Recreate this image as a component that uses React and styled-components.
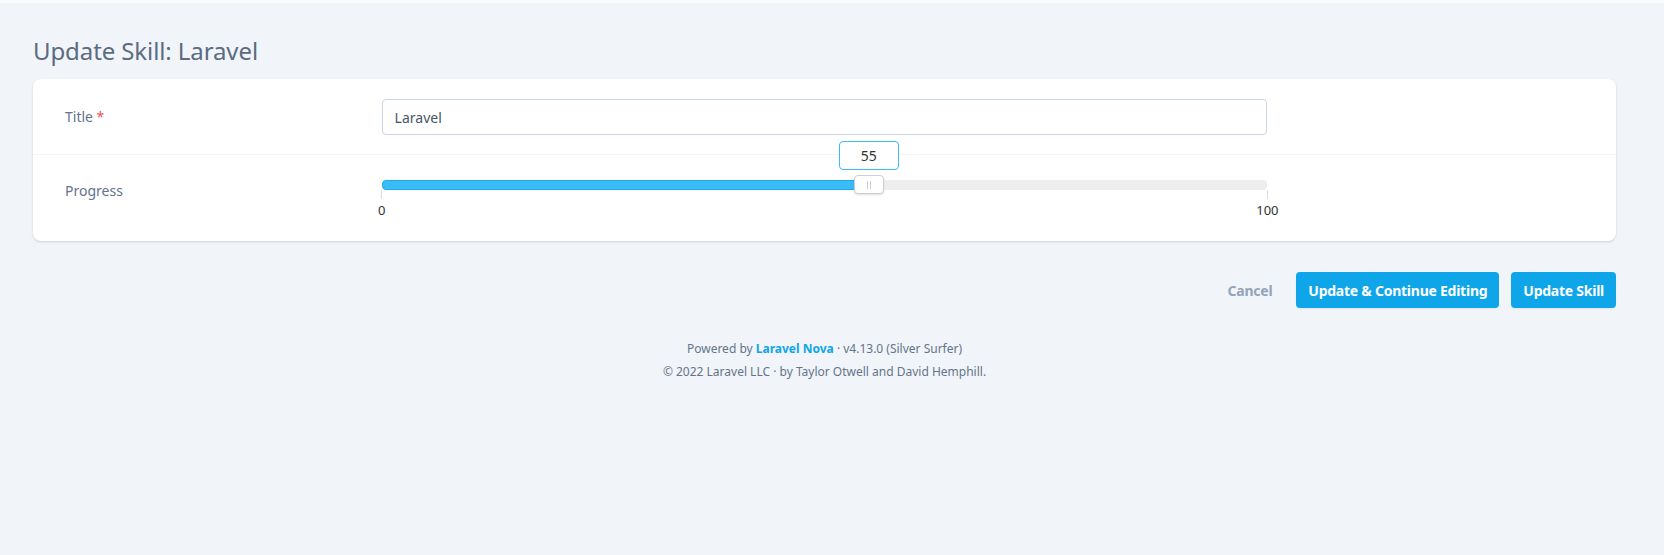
import React from 'react';
import styled, { createGlobalStyle } from 'styled-components';

const GlobalStyle = createGlobalStyle`
  html, body {
    margin: 0;
    padding: 0;
    background: #f1f5f9;
    font-family: 'Noto Sans', 'Open Sans', sans-serif;
    -webkit-font-smoothing: antialiased;
  }
  * {
    box-sizing: border-box;
  }
`;

const skill = { title: 'Laravel', progress: 55, min: 0, max: 100 };

export default function App() {
  const pct = ((skill.progress - skill.min) / (skill.max - skill.min)) * 100;

  return (
    <>
      <GlobalStyle />
      <TopStrip />
      <Main>
        <Heading>Update Skill: {skill.title}</Heading>
        <Card>
          <FieldRow>
            <LabelCol>
              <Label>
                Title <Required>*</Required>
              </Label>
            </LabelCol>
            <FieldCol>
              <TextInput type="text" defaultValue={skill.title} />
            </FieldCol>
          </FieldRow>
          <FieldRow $last>
            <LabelCol $offset={6}>
              <Label>Progress</Label>
            </LabelCol>
            <FieldCol>
              <Slider>
                <Rail>
                  <Fill style={{ width: `${pct}%` }} />
                  <Dot style={{ left: `${pct}%` }}>
                    <Grip />
                    <Grip />
                    <Tooltip>{skill.progress}</Tooltip>
                  </Dot>
                </Rail>
                <Marks>
                  <Mark>
                    <Tick />
                    <MarkLabel>{skill.min}</MarkLabel>
                  </Mark>
                  <Mark>
                    <Tick />
                    <MarkLabel>{skill.max}</MarkLabel>
                  </Mark>
                </Marks>
              </Slider>
            </FieldCol>
          </FieldRow>
        </Card>

        <Actions>
          <CancelButton type="button">Cancel</CancelButton>
          <PrimaryButton type="button">Update &amp; Continue Editing</PrimaryButton>
          <PrimaryButton type="button">Update Skill</PrimaryButton>
        </Actions>

        <Footer>
          <FooterLine>
            Powered by <FooterLink href="#">Laravel Nova</FooterLink> · v4.13.0 (Silver Surfer)
          </FooterLine>
          <FooterLine $second>© 2022 Laravel LLC · by Taylor Otwell and David Hemphill.</FooterLine>
        </Footer>
      </Main>
    </>
  );
}

const TopStrip = styled.div`
  height: 3px;
  background: #fafbfc;
`;

const Main = styled.main`
  padding: 0 48px 0 33px;
`;

const Heading = styled.h1`
  margin: 32px 0 12px;
  font-size: 24px;
  line-height: 32px;
  font-weight: 400;
  letter-spacing: -0.1px;
  color: #5b6b82;
`;

const Card = styled.div`
  background: #fff;
  border-radius: 8px;
  box-shadow: 0 1px 3px rgba(15, 23, 42, 0.1), 0 1px 2px rgba(15, 23, 42, 0.06);
`;

const FieldRow = styled.div`
  display: flex;
  align-items: flex-start;
  padding: 20px 0 ${(p) => (p.$last ? '22px' : '19px')};
  border-bottom: ${(p) => (p.$last ? 'none' : '1px solid #f1f5f9')};
`;

const LabelCol = styled.div`
  width: 20%;
  padding: ${(p) => p.$offset ?? 8}px 32px 0;
`;

const Label = styled.label`
  display: block;
  font-size: 14px;
  line-height: 20px;
  color: #64748b;
`;

const Required = styled.span`
  color: #f05252;
`;

const FieldCol = styled.div`
  width: 60%;
  padding: 0 32px;
`;

const TextInput = styled.input`
  display: block;
  width: 100%;
  height: 36px;
  padding: 0 12px;
  border: 1px solid #cbd5e1;
  border-radius: 4px;
  background: #fff;
  font-family: inherit;
  font-size: 14px;
  color: #475569;
  outline: none;
`;

const Slider = styled.div`
  padding-top: 5px;
`;

const Rail = styled.div`
  position: relative;
  height: 10px;
  border-radius: 4px;
  background: #eeeeee;
`;

const Fill = styled.div`
  height: 100%;
  border-radius: 4px;
  background: #38bdf8;
  border: 1px solid #1eabe8;
`;

const Dot = styled.div`
  position: absolute;
  top: -5px;
  width: 30px;
  height: 19px;
  transform: translateX(-50%);
  display: flex;
  align-items: center;
  justify-content: center;
  gap: 2px;
  background: #fff;
  border: 1px solid #cfcfcf;
  border-radius: 4px;
  box-shadow: 0 1px 2px rgba(0, 0, 0, 0.12);
`;

const Grip = styled.span`
  width: 1px;
  height: 8px;
  background: #cfcfcf;
`;

const Tooltip = styled.div`
  position: absolute;
  bottom: 23px;
  left: 50%;
  transform: translateX(-50%);
  width: 60px;
  height: 29px;
  display: flex;
  align-items: center;
  justify-content: center;
  background: #fff;
  border: 1px solid #38bdf8;
  border-radius: 4px;
  font-size: 14px;
  color: #333;
`;

const Marks = styled.div`
  display: flex;
  justify-content: space-between;
`;

const Mark = styled.div`
  width: 0;
  display: flex;
  flex-direction: column;
  align-items: center;
`;

const Tick = styled.span`
  width: 1px;
  height: 9px;
  background: #dddddd;
`;

const MarkLabel = styled.span`
  margin-top: 2px;
  font-size: 13px;
  line-height: 18px;
  color: #333;
  white-space: nowrap;
`;

const Actions = styled.div`
  display: flex;
  justify-content: flex-end;
  align-items: center;
  gap: 12px;
  margin-top: 31px;
`;

const ButtonBase = styled.button`
  height: 36px;
  padding: 0 12px;
  border: 0;
  border-radius: 4px;
  font-family: inherit;
  font-size: 14px;
  font-weight: 700;
  letter-spacing: -0.25px;
  cursor: pointer;
`;

const PrimaryButton = styled(ButtonBase)`
  background: #0ea5e9;
  color: #fff;
  box-shadow: 0 1px 2px rgba(0, 0, 0, 0.06);
`;

const CancelButton = styled(ButtonBase)`
  background: transparent;
  color: #94a3b8;
`;

const Footer = styled.footer`
  margin-top: 31px;
  text-align: center;
`;

const FooterLine = styled.p`
  margin: ${(p) => (p.$second ? '3px' : '0')} 0 0;
  font-size: 12px;
  line-height: 20px;
  color: #64748b;
`;

const FooterLink = styled.a`
  color: #0ea5e9;
  font-weight: 700;
  text-decoration: none;
`;
